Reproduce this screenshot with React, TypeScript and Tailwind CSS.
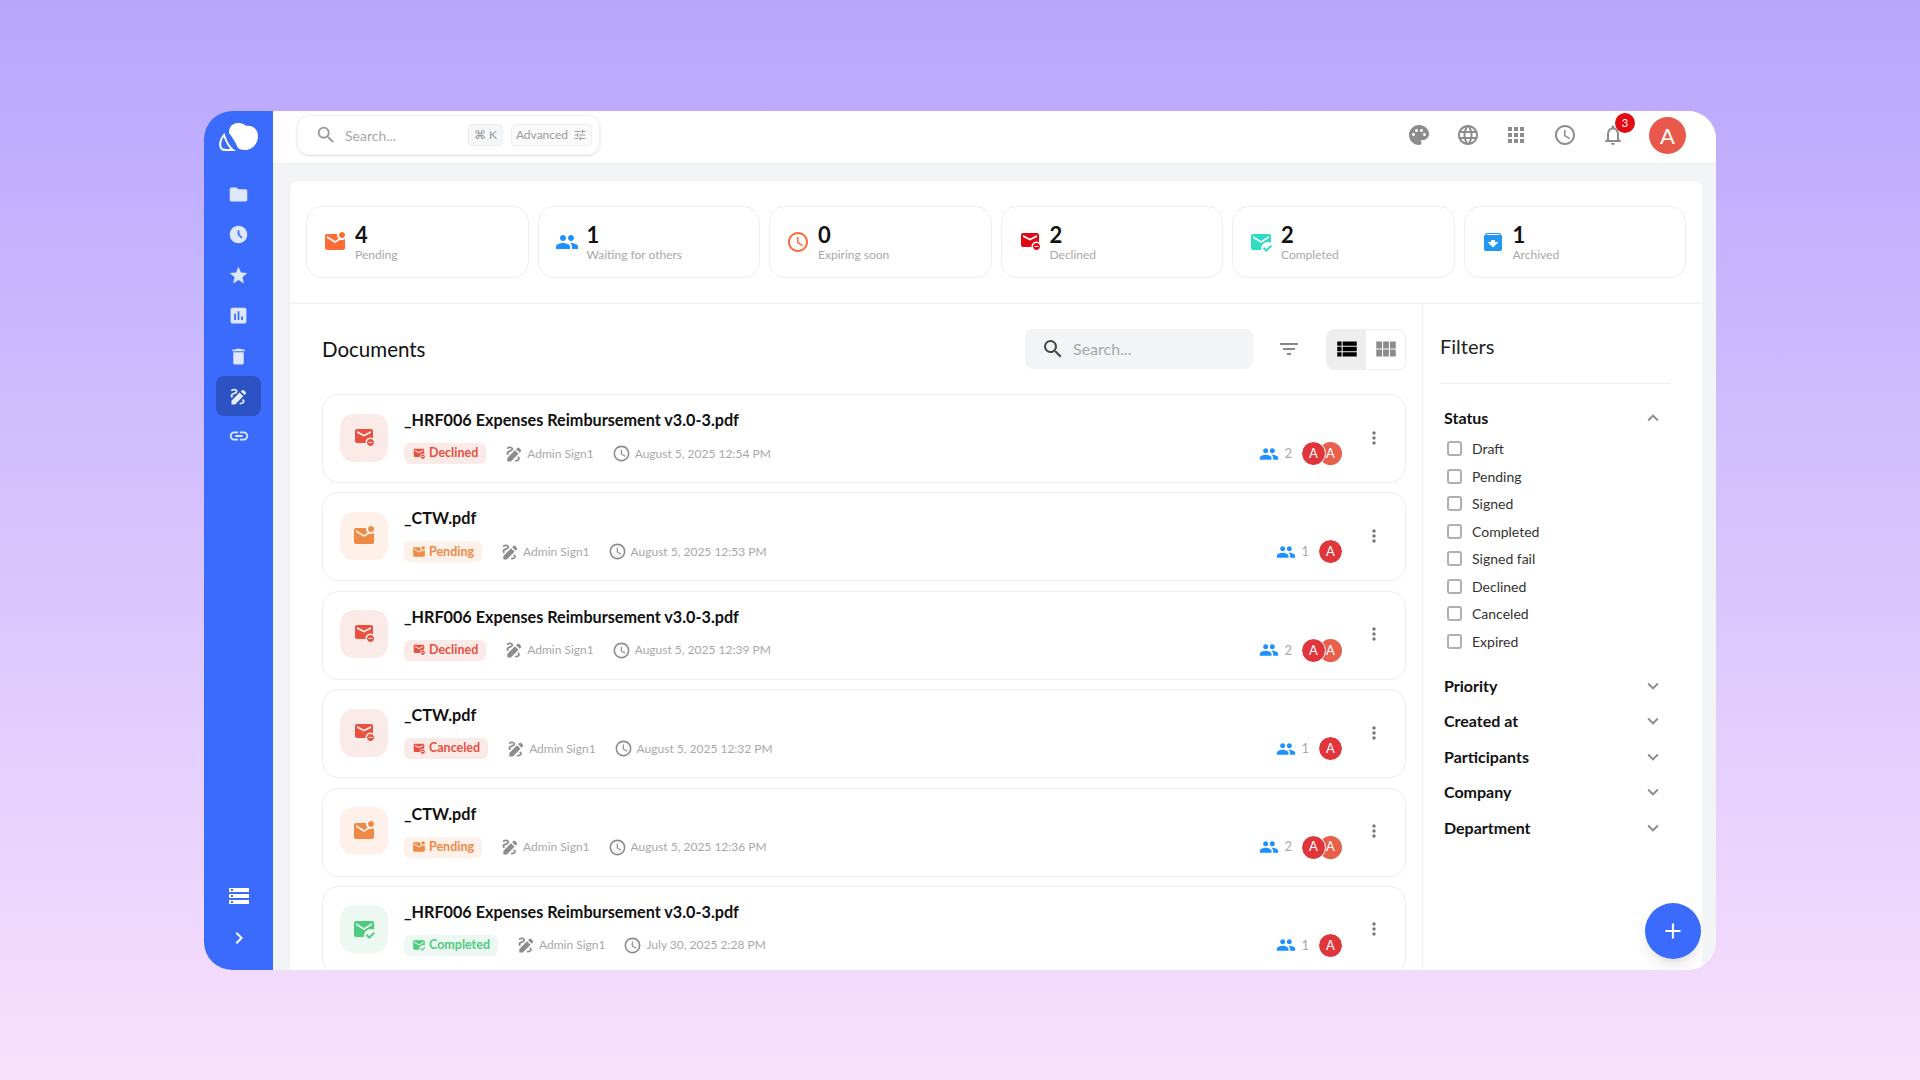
import {
  MdAccessTime,
  MdAccessTimeFilled,
  MdAdd,
  MdApps,
  MdArchive,
  MdChevronRight,
  MdDelete,
  MdDraw,
  MdExpandLess,
  MdExpandMore,
  MdFilterList,
  MdFolder,
  MdInsertChart,
  MdLanguage,
  MdLink,
  MdMarkEmailRead,
  MdMarkEmailUnread,
  MdMoreVert,
  MdNotificationsNone,
  MdOutlineSearch,
  MdPalette,
  MdPeople,
  MdSearch,
  MdStar,
  MdStorage,
  MdTune,
  MdUnsubscribe,
  MdViewList,
  MdViewModule,
} from "react-icons/md";

const stats = [
  { icon: MdMarkEmailUnread, color: "text-[#ff6b35]", count: 4, label: "Pending" },
  { icon: MdPeople, color: "text-[#1e90ff]", count: 1, label: "Waiting for others" },
  { icon: MdAccessTime, color: "text-[#ff6b35]", count: 0, label: "Expiring soon" },
  { icon: MdUnsubscribe, color: "text-[#e30613]", count: 2, label: "Declined" },
  { icon: MdMarkEmailRead, color: "text-[#2ddcc4]", count: 2, label: "Completed" },
  { icon: MdArchive, color: "text-[#2196f3]", count: 1, label: "Archived" },
];

const statusStyles = {
  Declined: { icon: MdUnsubscribe, tile: "bg-[#fbebe8]", text: "text-[#e8503f]" },
  Canceled: { icon: MdUnsubscribe, tile: "bg-[#fbebe8]", text: "text-[#e8503f]" },
  Pending: { icon: MdMarkEmailUnread, tile: "bg-[#fdf1e9]", text: "text-[#ee8a46]" },
  Completed: { icon: MdMarkEmailRead, tile: "bg-[#ecf8f1]", text: "text-[#4fcb80]" },
};

type Status = keyof typeof statusStyles;

const HRF = "_HRF006 Expenses Reimbursement v3.0-3.pdf";

const docs: { name: string; status: Status; date: string; people: number }[] = [
  { name: HRF, status: "Declined", date: "August 5, 2025 12:54 PM", people: 2 },
  { name: "_CTW.pdf", status: "Pending", date: "August 5, 2025 12:53 PM", people: 1 },
  { name: HRF, status: "Declined", date: "August 5, 2025 12:39 PM", people: 2 },
  { name: "_CTW.pdf", status: "Canceled", date: "August 5, 2025 12:32 PM", people: 1 },
  { name: "_CTW.pdf", status: "Pending", date: "August 5, 2025 12:36 PM", people: 2 },
  { name: HRF, status: "Completed", date: "July 30, 2025 2:28 PM", people: 1 },
];

const statusFilters = ["Draft", "Pending", "Signed", "Completed", "Signed fail", "Declined", "Canceled", "Expired"];
const otherFilters = ["Priority", "Created at", "Participants", "Company", "Department"];

function Logo() {
  return (
    <svg viewBox="0 0 40 30" className="w-[40px] h-[30px]" fill="white">
      <path d="M11 6C13 1 22-1 27 4 34 3 39 8 39 14 39 22 33 28 26 28 22 28 19 27 18 24 16 19 12 14 10 11 10 9 10 7 11 6z" />
      <path d="M5 13C2 17 0 22 2 26 3 28 5 28 7 28L14 28C10 25 7 19 5 13z" fill="none" stroke="white" strokeWidth="2" />
    </svg>
  );
}

function Sidebar() {
  const top = [MdFolder, MdAccessTimeFilled, MdStar, MdInsertChart, MdDelete];
  return (
    <aside className="w-[69px] shrink-0 bg-[#3b6bfd] flex flex-col items-center pt-[11px] pb-[20px]">
      <Logo />
      <div className="mt-[30px] flex flex-col items-center gap-[16.5px] text-[#dfe7ff]">
        {top.map((Icon, i) => (
          <div key={i} className="h-6 flex items-center justify-center">
            <Icon size={21} />
          </div>
        ))}
      </div>
      <div className="mt-[8px] w-[45px] h-[40px] rounded-lg bg-[#2c52c4] flex items-center justify-center text-[#e8edff]">
        <MdDraw size={21} />
      </div>
      <div className="mt-[8px] h-6 flex items-center text-[#dfe7ff]">
        <MdLink size={22} />
      </div>
      <div className="mt-auto flex flex-col items-center gap-[18px] text-white">
        <MdStorage size={24} />
        <MdChevronRight size={24} />
      </div>
    </aside>
  );
}

function Topbar() {
  const icons = [MdPalette, MdLanguage, MdApps, MdAccessTime];
  return (
    <header className="h-[53px] shrink-0 bg-white border-b border-[#eceef1] flex items-center pl-[24px] pr-[30px] pb-[4px]">
      <div className="w-[303px] h-[40px] rounded-xl border border-[#eef0f2] shadow-sm flex items-center pl-[17px] pr-[7px] text-[#a8a8a8]">
        <MdOutlineSearch size={22} className="text-[#9a9a9a]" />
        <span className="ml-[8px] text-[14px]">Search...</span>
        <span className="ml-auto h-[22px] px-[5px] rounded bg-[#f5f6f7] border border-[#eceef0] text-[12px] flex items-center gap-[2px] text-[#9a9a9a]">
          ⌘ K
        </span>
        <span className="ml-[8px] h-[22px] px-[4px] rounded bg-[#fafafa] border border-[#eceef0] text-[12px] flex items-center gap-[5px] text-[#9a9a9a]">
          Advanced <MdTune size={14} />
        </span>
      </div>
      <div className="ml-auto flex items-center text-[#8c8c8c]">
        <div className="flex items-center gap-[24.5px] mr-[24px]">
          {icons.map((Icon, i) => (
            <Icon key={i} size={24} />
          ))}
          <div className="relative">
            <MdNotificationsNone size={24} />
            <span className="absolute -top-[10px] left-[14px] w-[20px] h-[20px] rounded-full bg-[#e30b13] text-white text-[11px] flex items-center justify-center">
              3
            </span>
          </div>
        </div>
        <div className="w-[37px] h-[37px] rounded-full bg-[#e9594b] text-white text-[22px] flex items-center justify-center">
          A
        </div>
      </div>
    </header>
  );
}

function StatCards() {
  return (
    <div className="grid grid-cols-6 gap-[9px] pl-[16px] pr-[16px] pt-[25px] pb-[25px] border-b border-[#eceef1]">
      {stats.map((s) => (
        <div key={s.label} className="h-[72px] rounded-2xl border border-[#eceef1] flex items-center pl-[16px]">
          <s.icon size={24} className={s.color} />
          <div className="ml-[8px] pt-[1px]">
            <div className="text-[22px] leading-[24px] font-bold text-[#111]">{s.count}</div>
            <div className="text-[12px] leading-[15px] text-[#a8a8a8]">{s.label}</div>
          </div>
        </div>
      ))}
    </div>
  );
}

function Avatars({ count }: { count: number }) {
  return (
    <div className="flex flex-row-reverse">
      {count > 1 && (
        <span className="-ml-[6px] w-[23px] h-[23px] rounded-full bg-[#e8604c] text-white text-[13px] flex items-center justify-center">
          A
        </span>
      )}
      <span className="relative w-[23px] h-[23px] rounded-full bg-[#e0353b] text-white text-[13px] flex items-center justify-center outline outline-1 outline-white">
        A
      </span>
    </div>
  );
}

function DocRow({ doc }: { doc: (typeof docs)[number] }) {
  const st = statusStyles[doc.status];
  return (
    <div className="h-[89px] shrink-0 rounded-2xl border border-[#eceef1] flex items-center pl-[17px] pr-[21px]">
      <div className={`mb-[2px] w-[48px] h-[48px] rounded-[14px] flex items-center justify-center ${st.tile} ${st.text}`}>
        <st.icon size={24} />
      </div>
      <div className="ml-[16px] flex-1 self-start pt-[13px]">
        <div className="text-[16.2px] leading-[24px] font-bold text-[#111]">{doc.name}</div>
        <div className="mt-[11px] flex items-center h-[21px]">
          <span className={`h-[21px] rounded-md px-[8px] flex items-center gap-[3px] text-[12.5px] font-bold ${st.tile} ${st.text}`}>
            <st.icon size={14} />
            {doc.status}
          </span>
          <MdDraw size={20} className="ml-[18px] text-[#8c8c8c]" />
          <span className="ml-[3px] text-[12px] text-[#a8a8a8]">Admin Sign1</span>
          <MdAccessTime size={19} className="ml-[18px] text-[#8c8c8c]" />
          <span className="ml-[4px] text-[12px] text-[#a8a8a8]">{doc.date}</span>
          <div className="ml-auto flex items-center">
            <MdPeople size={20} className="text-[#1e90ff]" />
            <span className="ml-[5px] mr-[10px] text-[13px] text-[#a8a8a8]">{doc.people}</span>
            <Avatars count={doc.people} />
          </div>
        </div>
      </div>
      <MdMoreVert size={20} className="mb-[2px] ml-[22px] text-[#777]" />
    </div>
  );
}

function Documents() {
  return (
    <section className="flex-1 min-w-0 pl-[32px] pr-[16px] border-r border-[#eceef1]">
      <div className="h-[90px] flex items-center">
        <h2 className="text-[20.5px] font-normal text-[#111]">Documents</h2>
        <div className="ml-auto w-[228px] h-[40px] rounded-lg bg-[#f3f4f6] flex items-center pl-[16px] text-[#a8a8a8]">
          <MdSearch size={24} className="text-[#444]" />
          <span className="ml-[8px] text-[16px]">Search...</span>
        </div>
        <MdFilterList size={24} className="ml-[24px] text-[#888]" />
        <div className="ml-[25px] w-[80px] h-[41px] rounded-lg border border-[#eceef1] flex overflow-hidden">
          <div className="flex-1 bg-[#eeeeee] flex items-center justify-center text-black">
            <MdViewList size={26} />
          </div>
          <div className="flex-1 flex items-center justify-center text-[#8c8c8c]">
            <MdViewModule size={26} />
          </div>
        </div>
      </div>
      <div className="flex flex-col gap-[9.4px]">
        {docs.map((d, i) => (
          <DocRow key={i} doc={d} />
        ))}
      </div>
    </section>
  );
}

function Filters() {
  return (
    <aside className="relative w-[279px] shrink-0 pl-[17px] pr-[32px]">
      <div className="h-[80px] pt-[5px] flex items-center border-b border-[#eceef1] text-[20px] font-normal text-[#222] w-[230px]">
        Filters
      </div>
      <div className="pl-[4px] pr-[6px] mt-[22px]">
        <div className="flex items-center justify-between h-[24px]">
          <span className="text-[16px] font-bold text-[#111]">Status</span>
          <MdExpandLess size={22} className="text-[#8c8c8c]" />
        </div>
        <div className="mt-[5px] flex flex-col">
          {statusFilters.map((f) => (
            <label key={f} className="h-[27.5px] flex items-center pl-[3px] text-[14px] text-[#333]">
              <span className="w-[15px] h-[15px] rounded-[3px] border-2 border-[#b0b0b0]" />
              <span className="ml-[10px]">{f}</span>
            </label>
          ))}
        </div>
        <div className="mt-[18.5px] flex flex-col gap-[11.6px]">
          {otherFilters.map((f) => (
            <div key={f} className="flex items-center justify-between h-[24px]">
              <span className="text-[16px] font-bold text-[#111]">{f}</span>
              <MdExpandMore size={22} className="text-[#8c8c8c]" />
            </div>
          ))}
        </div>
      </div>
      <button className="absolute right-[1px] bottom-[11px] w-[56px] h-[56px] rounded-full bg-[#3b6bfd] shadow-lg flex items-center justify-center text-white">
        <MdAdd size={26} />
      </button>
    </aside>
  );
}

export default function App() {
  return (
    <div
      className="h-[1080px] w-full overflow-hidden bg-gradient-to-b from-[#b7a6fd] to-[#f9e0fc] pt-[111px] pl-[204px]"
      style={{ fontFamily: "Lato, 'Noto Sans', sans-serif" }}
    >
      <div className="w-[1512px] h-[859px] rounded-[28px] overflow-hidden flex bg-[#f3f4f6]">
        <Sidebar />
        <div className="flex-1 min-w-0 flex flex-col">
          <Topbar />
          <main className="flex-1 min-h-0 mt-[16px] ml-[16px] mr-[14px] bg-white rounded-t-lg flex flex-col overflow-hidden border-l border-t border-[#eef0f2]">
            <StatCards />
            <div className="flex flex-1 min-h-0">
              <Documents />
              <Filters />
            </div>
          </main>
        </div>
      </div>
    </div>
  );
}
